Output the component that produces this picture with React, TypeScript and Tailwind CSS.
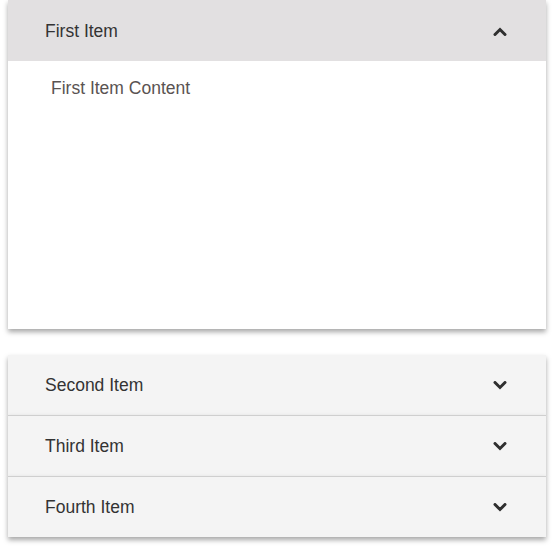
import React, { useState } from 'react';

const items = ['First Item', 'Second Item', 'Third Item', 'Fourth Item'];

const Chevron = ({ up }: { up: boolean }) => (
  <svg width="14" height="9" viewBox="0 0 14 9" className="block">
    <path
      d={up ? 'M2 7.5 L7 2.5 L12 7.5' : 'M2 1.5 L7 6.5 L12 1.5'}
      fill="none"
      stroke="#2f2f2f"
      strokeWidth="3"
      strokeLinecap="round"
      strokeLinejoin="miter"
    />
  </svg>
);

const App = () => {
  const [open, setOpen] = useState(0);

  return (
    <div className="px-2 pb-[10px] bg-white min-h-[547px]" style={{ fontFamily: '"Liberation Sans", Arial, sans-serif' }}>
      {items.map((label, i) => {
        const isOpen = open === i;
        const prevOpen = open === i - 1;
        return (
          <div
            key={label}
            className={
              'bg-[#f4f4f4] shadow-[0_3px_5px_rgba(0,0,0,0.35)] ' +
              (isOpen ? 'mb-[26px] ' : '') +
              (i > 0 && !isOpen && !prevOpen ? 'border-t border-[#cfcfcf] ' : '')
            }
          >
            <button
              onClick={() => setOpen(isOpen ? -1 : i)}
              className={
                'w-full flex items-center justify-between pl-[37px] pr-[39px] text-left text-[17.5px] text-[#333] ' +
                (isOpen ? 'bg-[#e2e0e1] h-[61px] pt-[2px]' : 'h-[60px]')
              }
            >
              <span>{label}</span>
              <Chevron up={isOpen} />
            </button>
            {isOpen && (
              <div className="bg-white h-[268px] pl-[43px] pt-[14px] text-[17.5px] text-[#5a5352]">
                {label} Content
              </div>
            )}
          </div>
        );
      })}
    </div>
  );
};

export default App;
